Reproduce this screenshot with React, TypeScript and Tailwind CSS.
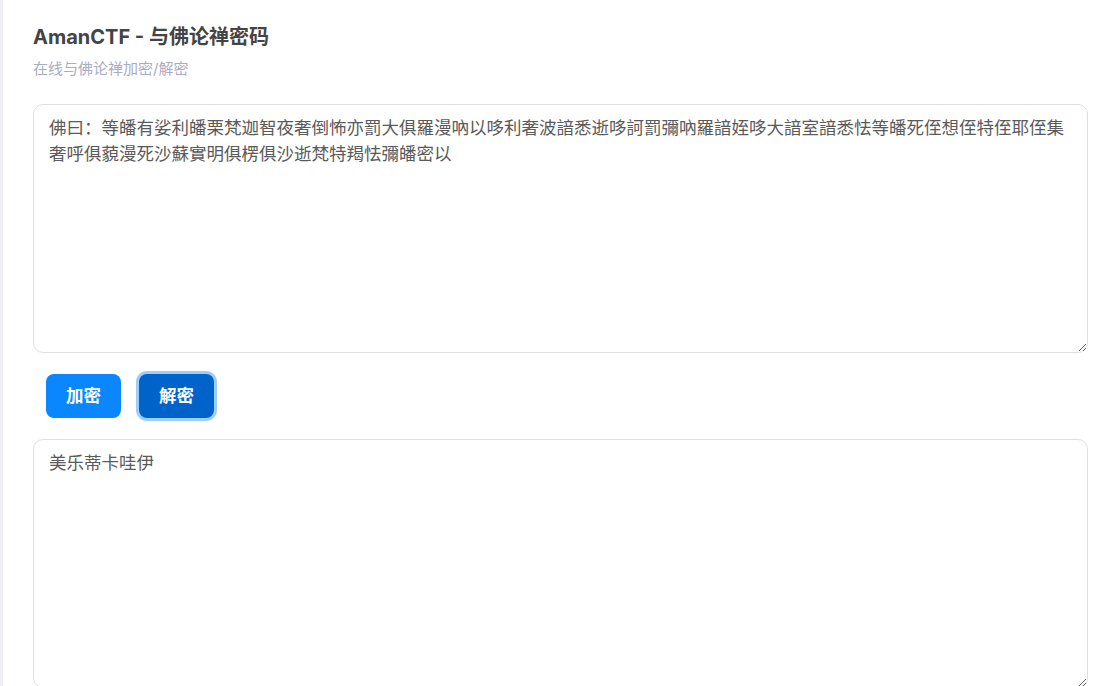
import { useState } from 'react';

const FONT = "font-['Inter','Noto_Sans_CJK_SC',sans-serif]";

const CIPHER =
    '佛曰：等皤有娑利皤栗梵迦智夜奢倒怖亦罰大俱羅漫吶以哆利奢波諳悉逝哆訶罰彌吶羅諳姪哆大諳室諳悉怯等皤死侄想侄特侄耶侄集奢呼俱藐漫死沙蘇實明俱楞俱沙逝梵特羯怯彌皤密以';

export default function App() {
    const [input, setInput] = useState(CIPHER);
    const [output, setOutput] = useState('美乐蒂卡哇伊');

    return (
        <div className={`min-h-screen bg-[#eceef1] pl-[3px] ${FONT}`}>
            <div className="min-h-screen bg-white pl-[30px] pr-[17px] pt-[24px]">
                <h1 className="text-[20px] leading-[26px] font-bold text-[#444444]">
                    AmanCTF - 与佛论禅密码
                </h1>
                <p className="mt-[9px] text-[15px] leading-[20px] text-[#a9acc4]">在线与佛论禅加密/解密</p>

                <textarea
                    value={input}
                    onChange={e => setInput(e.target.value)}
                    className="mt-[25px] block w-full h-[249px] rounded-[10px] border border-[#dfdfdf] px-[15px] py-[10px] text-[17.5px] leading-[26px] text-[#5a5a5a] outline-none resize-y"
                />

                <div className="flex gap-[18px] pl-[13px] py-[21px]">
                    <button className="h-[44px] w-[75px] rounded-[8px] bg-[#0a87fe] text-white text-[17.5px] font-bold">
                        加密
                    </button>
                    <button className="h-[44px] w-[75px] rounded-[8px] bg-[#0063ca] text-white text-[17.5px] font-bold ring-[3px] ring-[#9dcdfb]">
                        解密
                    </button>
                </div>

                <textarea
                    value={output}
                    onChange={e => setOutput(e.target.value)}
                    className="block w-full h-[249px] rounded-[10px] border border-[#dfdfdf] px-[15px] py-[10px] text-[17.5px] leading-[26px] text-[#5a5a5a] outline-none resize-y"
                />
            </div>
        </div>
    );
}
